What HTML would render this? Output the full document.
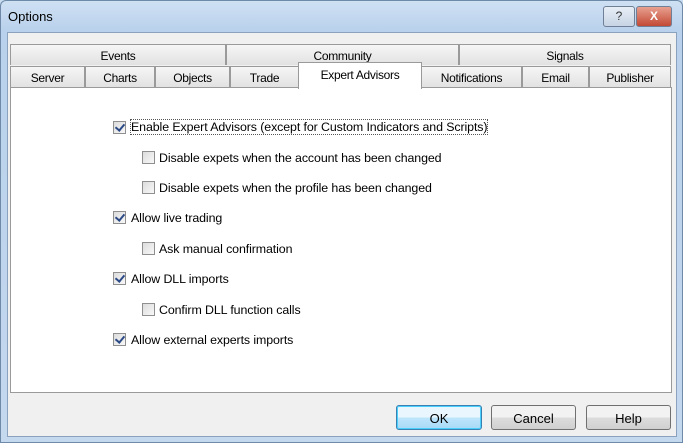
<!DOCTYPE html><html><head><style>
body{margin:0;width:683px;height:443px;overflow:hidden;background:#c9dcf0;font-family:"Liberation Sans",sans-serif;font-size:12px;color:#000;position:relative}
.frame{position:absolute;left:0;top:0;width:681px;height:441px;border:1px solid #6f8aa8;border-radius:6px 6px 0 0;background:linear-gradient(#cfe0f3,#b9d1ec 30px,#c4d8ee)}
.title{position:absolute;left:8px;top:9px;font-size:13px}
.tb{position:absolute;top:6px;height:19px;border:1px solid #6f7f95;border-radius:3px}
.client{position:absolute;left:7px;top:32px;width:668px;height:403px;background:#f0f0f0;border:1px solid #8aa2bd}
.tab{position:absolute;height:21px;border:1px solid #9a9a9a;border-bottom:none;background:linear-gradient(#f6f6f6,#e2e2e2);text-align:center;line-height:22px;box-sizing:border-box;letter-spacing:-0.3px}
.panel{position:absolute;left:10px;top:87px;width:662px;height:306px;background:#fff;border:1px solid #9a9a9a;box-sizing:border-box}
.cb{position:absolute;width:13px;height:13px;box-sizing:border-box;border:1px solid #8f8f8f;background:linear-gradient(135deg,#dcdcdc,#f8f8f8)}
.cb.c::after{content:"";position:absolute;left:3px;top:0px;width:4px;height:7px;border:solid #2b4a86;border-width:0 2px 2px 0;transform:rotate(40deg)}
.lb{position:absolute;font-size:12.4px;white-space:nowrap;letter-spacing:-0.1px}
.btn{position:absolute;top:405px;height:25px;border:1px solid #707070;border-radius:3px;background:linear-gradient(#f2f2f2 50%,#dcdcdc 50%,#d0d0d0);text-align:center;line-height:25px;box-sizing:border-box;font-size:13px}
</style></head><body>
<div class="frame"></div>
<div class="title">Options</div>
<div class="tb" style="left:603px;width:30px;background:linear-gradient(#e8eef6,#c7d4e4);text-align:center;font-size:12px;line-height:19px;color:#333">?</div>
<div class="tb" style="left:636px;width:34px;background:linear-gradient(#e8a090,#c24a35);text-align:center;color:#fff;font-weight:bold;line-height:19px">X</div>
<div class="client"></div>
<div class="tab" style="left:10px;top:44px;width:216px">Events</div>
<div class="tab" style="left:226px;top:44px;width:233px">Community</div>
<div class="tab" style="left:459px;top:44px;width:212px">Signals</div>
<div class="tab" style="left:10px;top:66px;width:75px">Server</div>
<div class="tab" style="left:85px;top:66px;width:70px">Charts</div>
<div class="tab" style="left:155px;top:66px;width:75px">Objects</div>
<div class="tab" style="left:230px;top:66px;width:69px">Trade</div>
<div class="tab" style="left:421px;top:66px;width:101px">Notifications</div>
<div class="tab" style="left:522px;top:66px;width:67px">Email</div>
<div class="tab" style="left:589px;top:66px;width:82px">Publisher</div>
<div class="panel"></div>
<div class="tab" style="left:298px;top:62px;width:124px;height:27px;background:#fff;line-height:24px;z-index:2">Expert Advisors</div>

<div class="cb c" style="left:113px;top:121px"></div><div class="lb" style="left:131px;top:120px;outline:1px dotted #555">Enable Expert Advisors (except for Custom Indicators and Scripts)</div>
<div class="cb" style="left:142px;top:151px"></div><div class="lb" style="left:159px;top:151px">Disable expets when the account has been changed</div>
<div class="cb" style="left:142px;top:181px"></div><div class="lb" style="left:159px;top:181px">Disable expets when the profile has been changed</div>
<div class="cb c" style="left:113px;top:211px"></div><div class="lb" style="left:131px;top:211px">Allow live trading</div>
<div class="cb" style="left:142px;top:242px"></div><div class="lb" style="left:159px;top:242px">Ask manual confirmation</div>
<div class="cb c" style="left:113px;top:272px"></div><div class="lb" style="left:131px;top:272px">Allow DLL imports</div>
<div class="cb" style="left:142px;top:303px"></div><div class="lb" style="left:159px;top:303px">Confirm DLL function calls</div>
<div class="cb c" style="left:113px;top:333px"></div><div class="lb" style="left:131px;top:333px">Allow external experts imports</div>

<div class="btn" style="left:396px;width:86px;border-color:#3c7fb1;background:linear-gradient(#eaf6fd 50%,#bee6fd 50%,#a7d9f5);box-shadow:inset 0 0 0 1px #48d0fd">OK</div>
<div class="btn" style="left:491px;width:85px">Cancel</div>
<div class="btn" style="left:586px;width:85px">Help</div>
</body></html>
